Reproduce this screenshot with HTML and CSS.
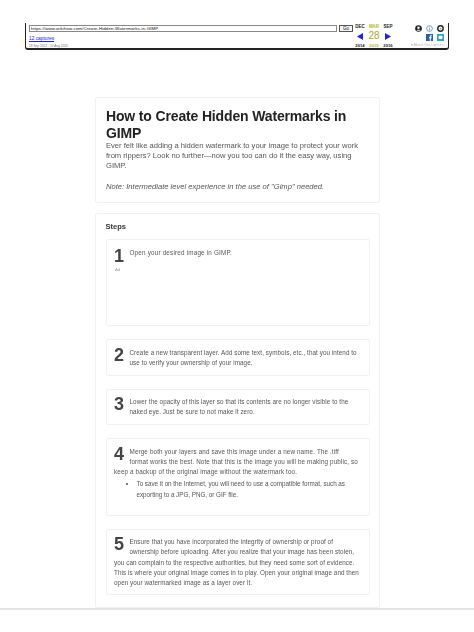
FILE: index.html
```html
<!DOCTYPE html>
<html lang="en">
<head>
<meta charset="utf-8">
<title>How to Create Hidden Watermarks in GIMP</title>
<link rel="stylesheet" href="styles.css">
</head>
<body>
<div class="page">
  <header class="toolbar">
    <div class="tb-main">
      <div class="url-row">
        <div class="url">https://www.wikihow.com/Create-Hidden-Watermarks-in-GIMP</div>
        <div class="go">Go</div>
      </div>
      <a class="captures">12 captures</a>
      <div class="range">18 Sep 2012 - 10 Aug 2020</div>
    </div>
    <div class="calendar">
      <div class="cal-col">
        <span class="month">DEC</span>
        <svg class="arrow" viewBox="0 0 7 8"><path d="M7 0V8L0 4Z"/></svg>
        <span class="year">2014</span>
      </div>
      <div class="cal-col cal-now">
        <span class="month">MAR</span>
        <span class="day">28</span>
        <span class="year">2015</span>
      </div>
      <div class="cal-col">
        <span class="month">SEP</span>
        <svg class="arrow" viewBox="0 0 7 8"><path d="M0 0V8L7 4Z"/></svg>
        <span class="year">2016</span>
      </div>
    </div>
    <div class="tools">
      <div class="icons">
        <svg class="ico" viewBox="0 0 8 8"><circle cx="4" cy="4" r="3.8" fill="#222"/><circle cx="4" cy="3.2" r="1.5" fill="#eee"/><path d="M1.6 6.6C2.2 5 5.8 5 6.4 6.6Z" fill="#eee"/></svg>
        <svg class="ico" viewBox="0 0 8 8"><circle cx="4" cy="4" r="3.3" fill="#fff" stroke="#4a86c5" stroke-width=".9"/><path d="M4 2v.8M4 3.6V6" stroke="#4a86c5" stroke-width=".9"/></svg>
        <svg class="ico" viewBox="0 0 8 8"><circle cx="4" cy="4" r="3.1" fill="none" stroke="#222" stroke-width="1.6"/><circle cx="4" cy="4" r="1" fill="#888"/></svg>
      </div>
      <div class="icons">
        <svg class="ico" viewBox="0 0 7 7"><rect width="7" height="7" fill="#2f5f9e"/><path d="M4.8 7V4.3h.9l.1-1H4.8v-.6c0-.3.1-.5.5-.5h.5v-.9H5C4.200 1.300 3.800 1.800 3.800 2.600v.7H3v1h.8V7Z" fill="#fff"/></svg>
        <svg class="ico" viewBox="0 0 7 7"><rect width="7" height="7" fill="#2f9fc4"/><rect x="1.500" y="1.700" width="4" height="3.200" rx=".8" fill="#fff"/></svg>
      </div>
      <div class="about">▾ About this capture</div>
    </div>
  </header>

  <main class="content">
    <section class="card intro">
      <h1>How to Create Hidden Watermarks in GIMP</h1>
      <p>Ever felt like adding a hidden watermark to your image to protect your work from rippers? Look no further—now you too can do it the easy way, using GIMP.</p>
      <p class="note">Note: Intermediate level experience in the use of "Gimp" needed.</p>
    </section>

    <section class="card steps">
      <h2>Steps</h2>
      <article class="step step-ad">
        <div class="num-wrap"><span class="num">1</span><span class="ad">Ad</span></div>
        <p>Open your desired image in GIMP.</p>
      </article>
      <article class="step">
        <span class="num">2</span>
        <p>Create a new transparent layer. Add some text, symbols, etc., that you intend to use to verify your ownership of your image.</p>
      </article>
      <article class="step">
        <span class="num">3</span>
        <p>Lower the opacity of this layer so that its contents are no longer visible to the naked eye. Just be sure to not make it zero.</p>
      </article>
      <article class="step step-four">
        <span class="num">4</span>
        <p>Merge both your layers and save this image under a new name. The .tiff<br>format works the best. Note that this is the image you will be making public, so keep a backup of the original image without the watermark too.</p>
        <ul>
          <li>To save it on the Internet, you will need to use a compatible format, such as exporting to a JPG, PNG, or GIF file.</li>
        </ul>
      </article>
      <article class="step step-five">
        <span class="num">5</span>
        <p>Ensure that you have incorporated the integrity of ownership or proof of ownership before uploading. After you realize that your image has been stolen, you can complain to the respective authorities, but they need some sort of evidence. This is where your original image comes in to play. Open your original image and then open your watermarked image as a layer over it.</p>
      </article>
    </section>
  </main>
  <div class="rule"></div>
</div>
</body>
</html>
```
FILE: styles.css
```css
* { box-sizing: border-box; }
html, body { margin: 0; height: 100%; background: #fff; overflow: hidden; }
body { font-family: "Liberation Sans", Arial, sans-serif; color: #333; }
.page { width: 474px; height: 632px; padding-top: 23px; display: flex; flex-direction: column; filter: blur(0.45px); }

.toolbar {
  margin: 0 25px;
  height: 27px;
  flex: none;
  display: flex;
  padding: 2px 3px 0 3px;
  background: #fff;
  border: solid #222;
  border-width: 0 1px 2px 1px;
  border-radius: 0 0 3px 3px;
}
.tb-main { width: 325px; flex: none; }
.url-row { display: flex; gap: 2px; }
.url {
  width: 308px; height: 7px;
  border: 1px solid #888;
  font-size: 4.4px; line-height: 5px;
  padding-left: 1px; color: #111; letter-spacing: .12px;
  white-space: nowrap; overflow: hidden;
}
.go {
  width: 14px; height: 7px; border: 1px solid #555;
  font-size: 4.5px; line-height: 5px; text-align: center; color: #111; background: #f4f4f4;
}
.captures { display: block; margin-top: 4px; font-size: 4.8px; line-height: 6px; color: #2222cc; text-decoration: underline; }
.range { margin-top: 2px; font-size: 3.2px; line-height: 4px; color: #777; }

.calendar { display: flex; width: 42px; flex: none; margin-top: -1px; margin-left: -1px; }
.cal-col { width: 14px; display: flex; flex-direction: column; align-items: center; }
.month { font-size: 4.5px; line-height: 6px; color: #222; font-weight: bold; white-space: nowrap; }
.year { font-size: 4.2px; line-height: 5px; color: #222; font-weight: bold; margin-top: 0; white-space: nowrap; }
.arrow { width: 6px; height: 7px; fill: #2222dd; margin-top: 3px; margin-bottom: 3px; }
.cal-now .month, .cal-now .year { color: #b5b52a; }
.day { font-size: 10px; line-height: 12px; color: #a8a81e; margin-bottom: 1px; }

.tools { flex: 1; display: flex; flex-direction: column; align-items: flex-end; padding-right: 1px; }
.icons { display: flex; gap: 4px; justify-content: flex-end; margin-bottom: 2px; }
.ico { width: 7px; height: 7px; display: block; }
.about { font-size: 3.8px; line-height: 4px; color: #bbb; white-space: nowrap; }

.content { width: 285px; margin: 47px 0 0 95px; display: flex; flex-direction: column; gap: 9.7px; flex: none; }
.card { border: 1px solid #f1f1f1; border-radius: 2px; background: #fff; }
.intro { height: 106.3px; padding: 10px 10px 0; }
h1 { margin: 0; font-size: 14px; line-height: 16.5px; font-weight: bold; color: #222; letter-spacing: -.15px; }
.intro p { margin: 0; font-size: 7.6px; line-height: 10.2px; color: #555; }
.intro .note { margin-top: 10.2px; font-style: italic; }

.steps { height: 395px; padding: 7.5px 9.5px 0; }
h2 { margin: 0 0 6.8px; font-size: 7.5px; line-height: 11px; color: #333; font-weight: bold; }
.step { border: 1px solid #f1f1f1; border-radius: 2px; padding: 7.5px 9.5px 0 7.5px; margin-bottom: 12.8px; height: 36.7px; }
.step-four { height: 77.7px; }
.step-five { height: 66.5px; }
.step-ad { height: 87px; }
.num { float: left; font-size: 18px; line-height: 15px; font-weight: bold; color: #444; width: 15.5px; margin-bottom: 3px; }
.num-wrap { float: left; width: 15.5px; padding-top: 1.5px; }
.num-wrap .num { float: none; display: block; margin-bottom: 0; }
.ad { display: block; margin-top: 3px; padding-left: 1px; font-size: 4.2px; line-height: 5px; color: #999; }
.step p, .step li { margin: 0; font-size: 6.3px; line-height: 10.3px; color: #555; letter-spacing: .07px; }
.step-ad p { letter-spacing: .2px; }
.step-four p { letter-spacing: .13px; }
.step-four li { letter-spacing: -.02px; }
.step ul { margin: 2px 0 0; padding: 0 0 0 22.5px; clear: both; }

.rule { height: 2px; background: #e4e4e4; flex: none; }
```
